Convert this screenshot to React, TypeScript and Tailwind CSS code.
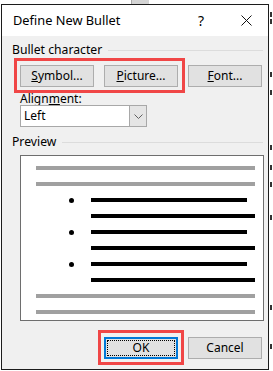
import React from "react";

function Btn({ children, className = "" }: { children: React.ReactNode; className?: string }) {
  return (
    <div
      className={`w-[74px] h-[22px] bg-[#e1e1e1] border border-[#adadad] flex items-center justify-center text-[12px] text-black leading-none ${className}`}
    >
      {children}
    </div>
  );
}

function GrayLine() {
  return <div className="h-[4px] w-[219px] bg-[#a0a0a0]" />;
}

function BulletLine() {
  return (
    <div className="flex items-center h-[4px]">
      <div className="ml-[33px] w-[5px] h-[5px] rounded-full bg-black shrink-0" />
      <div className="ml-[17px] w-[156px] h-[4px] bg-black shrink-0" />
    </div>
  );
}

function ContLine() {
  return (
    <div className="flex h-[4px]">
      <div className="ml-[55px] w-[164px] h-[4px] bg-black" />
    </div>
  );
}

export default function App() {
  const marks = [12, 19, 72, 90, 145, 165, 182, 215, 305, 344];
  return (
    <div className="relative w-[273px] h-[371px] bg-white overflow-hidden font-['Noto_Sans',sans-serif] text-black">
      {/* background bits behind the dialog */}
      <div className="absolute left-[131px] top-0 w-[18px] h-[4px] bg-[#d4d4d4] border-l border-[#a8a8a8]" />
      {marks.map((y) => (
        <div key={y} className="absolute left-[270px] w-[2px] h-[5px] bg-[#333]" style={{ top: y }} />
      ))}

      {/* dialog window */}
      <div className="ml-[1px] mt-[4px] w-[268px] h-[366px] border border-[#1c1c1c] flex flex-col bg-[#f0f0f0]">
        {/* title bar */}
        <div className="h-[31px] bg-white flex items-center pl-[11px] shrink-0">
          <span className="text-[12.8px] leading-none">Define New Bullet</span>
          <div className="ml-auto w-[20px] flex justify-center text-[14px] leading-none">?</div>
          <div className="ml-[25px] mr-[12px] w-[20px] flex justify-center">
            <svg width="11" height="11" viewBox="0 0 11 11">
              <path d="M0.5 0.5 L10.5 10.5 M10.5 0.5 L0.5 10.5" stroke="#111" strokeWidth="1" fill="none" />
            </svg>
          </div>
        </div>

        {/* body */}
        <div className="flex flex-col flex-1">
          {/* Bullet character group header */}
          <div className="mt-[7px] h-[14px] pl-[10px] flex items-center">
            <span className="text-[12.2px] leading-none whitespace-nowrap">Bullet character</span>
            <div className="flex-1 ml-[6px] mr-[5px] h-px bg-[#dcdcdc]" />
          </div>

          {/* buttons row */}
          <div className="mt-[1px] flex items-center">
            <div className="ml-[12px] w-[171px] h-[35px] border-[3px] border-[#f04646] flex items-center pl-[3px] gap-[10px]">
              <Btn>
                <span className="underline underline-offset-1">S</span>ymbol...
              </Btn>
              <Btn>
                <span className="underline underline-offset-1">P</span>icture...
              </Btn>
            </div>
            <Btn className="ml-[3px]">
              <span className="underline underline-offset-1">F</span>ont...
            </Btn>
          </div>

          {/* alignment */}
          <div className="ml-[18px] h-[12px] flex items-center text-[12px] leading-none">
            Align<span className="underline underline-offset-1">m</span>ent:
          </div>
          <div className="ml-[18px] w-[127px] h-[22px] border border-[#a8a8a8] bg-white flex">
            <div className="flex-1 flex items-center pl-[3px] text-[12px] leading-none">Left</div>
            <div className="w-[17px] bg-[#e5e5e5] border-l border-[#a8a8a8] flex items-center justify-center">
              <svg width="9" height="5" viewBox="0 0 9 5">
                <path d="M0.5 0.5 L4.5 4.5 L8.5 0.5" stroke="#606060" strokeWidth="1" fill="none" />
              </svg>
            </div>
          </div>

          {/* preview header */}
          <div className="mt-[8px] h-[14px] pl-[10px] flex items-center">
            <span className="text-[12.2px] leading-none">Preview</span>
            <div className="flex-1 ml-[6px] mr-[5px] h-px bg-[#dcdcdc]" />
          </div>

          {/* preview box */}
          <div className="mt-[6px] ml-[18px] w-[244px] h-[166px] border border-[#6e6e6e] bg-white pl-[15px] pt-[10px] flex flex-col gap-[12px]">
            <GrayLine />
            <GrayLine />
            <BulletLine />
            <ContLine />
            <BulletLine />
            <ContLine />
            <BulletLine />
            <ContLine />
            <GrayLine />
            <GrayLine />
          </div>

          {/* bottom buttons */}
          <div className="mt-[9px] flex items-center justify-end pr-[6px]">
            <div className="w-[86px] h-[35px] border-[3px] border-[#f04646] flex items-center justify-center">
              <div className="w-[74px] h-[22px] bg-[#e1e1e1] border-2 border-[#0078d7] p-px">
                <div className="w-full h-full border border-dotted border-black flex items-center justify-center text-[12px] leading-none">
                  OK
                </div>
              </div>
            </div>
            <Btn className="ml-[4px]">Cancel</Btn>
          </div>
        </div>
      </div>
    </div>
  );
}
